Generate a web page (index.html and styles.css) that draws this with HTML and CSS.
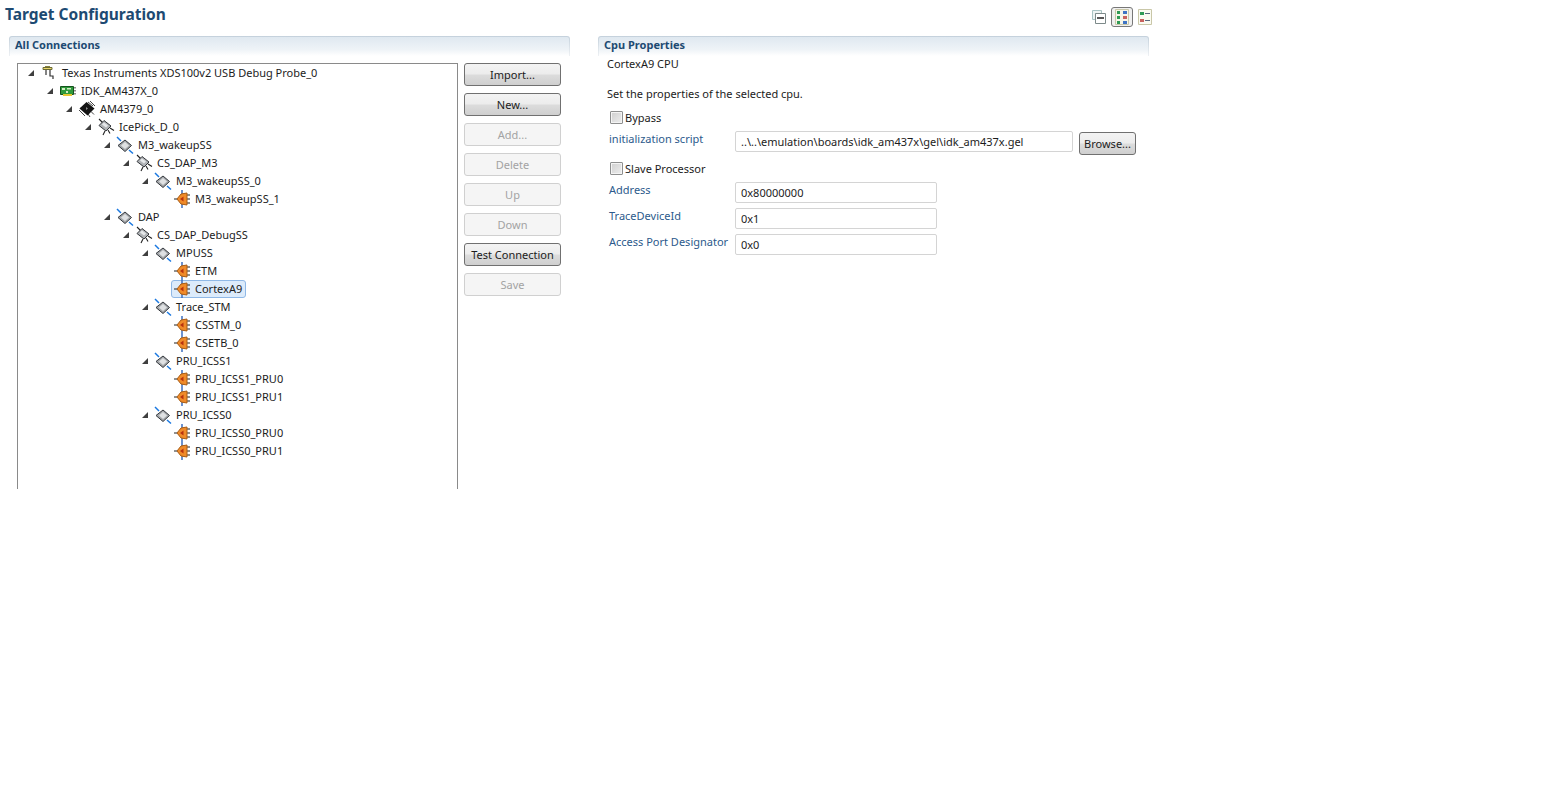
FILE: index.html
```html
<!DOCTYPE html>
<html lang="en">
<head>
    <meta charset="UTF-8">
    <title>Target Configuration</title>
    <link rel="stylesheet" href="styles.css">
</head>
<body>

    <svg class="icon-defs" aria-hidden="true">
        <symbol id="i-probe" viewBox="0 0 16 16">
            <path d="M5 4v6M9 4v7h3v3" fill="none" stroke="#333" stroke-width="1.2"/>
            <path d="M2 2.500h9v2H2z" fill="#e8d76a" stroke="#6b6a35" stroke-width="1"/>
            <path d="M4 1.500h5" stroke="#8a8540" stroke-width="1"/>
        </symbol>
        <symbol id="i-board" viewBox="0 0 16 16">
            <path d="M0.500 3.500h13v8h-13z" fill="#2f9a3c" stroke="#14521c"/>
            <path d="M2 5h3v2H2zM7 5h4v1.500H7zM6 8h2v2H6z" fill="#d4ecc4"/>
            <path d="M3 11h9v2H3z" fill="#e6c832"/>
            <path d="M15 4v1.500M15 7v1.500M15 10v1.500" stroke="#222" stroke-width="1"/>
        </symbol>
        <symbol id="i-chip" viewBox="0 0 16 16">
            <path d="M0 9l4 4M2 6.500l4 4M9 1l5 4M11 0l5 5M3 12l3 3M9 13l2 3M12 10.500l3 3" stroke="#444" stroke-width="1"/>
            <path d="M7.500 1l8 6.500-7 7-8-7z" fill="#141414"/>
            <path d="M7 6l2 1.500-2 1.500z" fill="#8a8a8a"/>
        </symbol>
        <symbol id="i-router" viewBox="0 0 16 16">
            <path d="M7 12l-2 4M10 11l2 3.500M12 9l4 2.500M1 0l4 4" stroke="#222" stroke-width="1.100" fill="none"/>
            <path d="M6 1.500l7 5.500-5 5-7-5.500z" fill="#b0b3b6" stroke="#34373c"/>
            <path d="M6 3.500l4 3-2 2-4-3z" fill="#e6e8ea"/>
        </symbol>
        <symbol id="i-node" viewBox="0 0 16 16">
            <path d="M8 3l6.500 5.500-6.500 6-7-6z" fill="#a4a7aa" stroke="#34383e"/>
            <path d="M8 5l4 3.500-4 3.500-4-3.500z" fill="#dfe1e3"/>
            <path d="M0 0l4 4M12 13l4 3.500" stroke="#1a78e0" stroke-width="1.500"/>
        </symbol>
        <symbol id="i-core" viewBox="0 0 16 16">
            <path d="M8 -1v4M8 13v4" stroke="#3c6fc0" stroke-width="1.500"/>
            <path d="M0 8h3M13 4h3M13 8h3M13 12h3" stroke="#222" stroke-width="1"/>
            <path d="M3 8l4-5 6-1v12l-6-1z" fill="#f08b2a" stroke="#a85c14"/>
            <path d="M6 8l3.500-2.500v5z" fill="#b8320f"/>
        </symbol>
    </svg>

    <div class="page">
        <header class="page-head">
            <h1>Target Configuration</h1>
            <div class="toolbar">
                <span class="tool">
                    <svg width="14" height="14" viewBox="0 0 14 14">
                        <path d="M0.500 0.500h9v3h-6v6h-3z" fill="#eef3f3" stroke="#a9c4c4"/>
                        <path d="M3.500 3.500h10v10h-10z" fill="#fff" stroke="#7d8a8a"/>
                        <path d="M5 8h7" stroke="#111" stroke-width="1.400"/>
                    </svg>
                </span>
                <span class="tool tool-on">
                    <svg width="14" height="16" viewBox="0 0 14 16">
                        <path d="M0.500 0.500h13v15h-13z" fill="#f6f5e8" stroke="#c9c7a8"/>
                        <path d="M2 2h3v3H2zM2 7h3v3H2zM2 12h3v3H2z" fill="#2f9a55"/>
                        <path d="M8 2h4v3H8zM8 12h4v3H8z" fill="#3f74c4"/>
                        <path d="M8 7h4v3H8z" fill="#c9625e"/>
                    </svg>
                </span>
                <span class="tool">
                    <svg width="14" height="16" viewBox="0 0 14 16">
                        <path d="M0.500 0.500h13v15h-13z" fill="#fbfbf2" stroke="#c9c7a8"/>
                        <path d="M2 3h4v3H2z" fill="#2f9a55"/>
                        <path d="M2 10h4v3H2z" fill="#c9625e"/>
                        <path d="M7 4.500h5M7 11.500h5" stroke="#5a6a80" stroke-width="1.200"/>
                    </svg>
                </span>
            </div>
        </header>

        <main class="columns">
            <section class="panel panel-left">
                <h2 class="panel-title">All Connections</h2>
                <div class="connections">
                    <div class="tree">
                        <ul>
                            <li>
                                <div class="row"><i class="arrow"></i><span class="item"><svg class="ic"><use href="#i-probe"/></svg>Texas Instruments XDS100v2 USB Debug Probe_0</span></div>
                                <ul>
                                    <li>
                                        <div class="row"><i class="arrow"></i><span class="item"><svg class="ic"><use href="#i-board"/></svg>IDK_AM437X_0</span></div>
                                        <ul>
                                            <li>
                                                <div class="row"><i class="arrow"></i><span class="item"><svg class="ic"><use href="#i-chip"/></svg>AM4379_0</span></div>
                                                <ul>
                                                    <li>
                                                        <div class="row"><i class="arrow"></i><span class="item"><svg class="ic"><use href="#i-router"/></svg>IcePick_D_0</span></div>
                                                        <ul>
                                                            <li>
                                                                <div class="row"><i class="arrow"></i><span class="item"><svg class="ic"><use href="#i-node"/></svg>M3_wakeupSS</span></div>
                                                                <ul>
                                                                    <li>
                                                                        <div class="row"><i class="arrow"></i><span class="item"><svg class="ic"><use href="#i-router"/></svg>CS_DAP_M3</span></div>
                                                                        <ul>
                                                                            <li>
                                                                                <div class="row"><i class="arrow"></i><span class="item"><svg class="ic"><use href="#i-node"/></svg>M3_wakeupSS_0</span></div>
                                                                                <ul>
                                                                                    <li><div class="row"><i class="arrow none"></i><span class="item"><svg class="ic"><use href="#i-core"/></svg>M3_wakeupSS_1</span></div></li>
                                                                                </ul>
                                                                            </li>
                                                                        </ul>
                                                                    </li>
                                                                </ul>
                                                            </li>
                                                            <li>
                                                                <div class="row"><i class="arrow"></i><span class="item"><svg class="ic"><use href="#i-node"/></svg>DAP</span></div>
                                                                <ul>
                                                                    <li>
                                                                        <div class="row"><i class="arrow"></i><span class="item"><svg class="ic"><use href="#i-router"/></svg>CS_DAP_DebugSS</span></div>
                                                                        <ul>
                                                                            <li>
                                                                                <div class="row"><i class="arrow"></i><span class="item"><svg class="ic"><use href="#i-node"/></svg>MPUSS</span></div>
                                                                                <ul>
                                                                                    <li><div class="row"><i class="arrow none"></i><span class="item"><svg class="ic"><use href="#i-core"/></svg>ETM</span></div></li>
                                                                                    <li><div class="row"><i class="arrow none"></i><span class="item selected"><svg class="ic"><use href="#i-core"/></svg>CortexA9</span></div></li>
                                                                                </ul>
                                                                            </li>
                                                                            <li>
                                                                                <div class="row"><i class="arrow"></i><span class="item"><svg class="ic"><use href="#i-node"/></svg>Trace_STM</span></div>
                                                                                <ul>
                                                                                    <li><div class="row"><i class="arrow none"></i><span class="item"><svg class="ic"><use href="#i-core"/></svg>CSSTM_0</span></div></li>
                                                                                    <li><div class="row"><i class="arrow none"></i><span class="item"><svg class="ic"><use href="#i-core"/></svg>CSETB_0</span></div></li>
                                                                                </ul>
                                                                            </li>
                                                                            <li>
                                                                                <div class="row"><i class="arrow"></i><span class="item"><svg class="ic"><use href="#i-node"/></svg>PRU_ICSS1</span></div>
                                                                                <ul>
                                                                                    <li><div class="row"><i class="arrow none"></i><span class="item"><svg class="ic"><use href="#i-core"/></svg>PRU_ICSS1_PRU0</span></div></li>
                                                                                    <li><div class="row"><i class="arrow none"></i><span class="item"><svg class="ic"><use href="#i-core"/></svg>PRU_ICSS1_PRU1</span></div></li>
                                                                                </ul>
                                                                            </li>
                                                                            <li>
                                                                                <div class="row"><i class="arrow"></i><span class="item"><svg class="ic"><use href="#i-node"/></svg>PRU_ICSS0</span></div>
                                                                                <ul>
                                                                                    <li><div class="row"><i class="arrow none"></i><span class="item"><svg class="ic"><use href="#i-core"/></svg>PRU_ICSS0_PRU0</span></div></li>
                                                                                    <li><div class="row"><i class="arrow none"></i><span class="item"><svg class="ic"><use href="#i-core"/></svg>PRU_ICSS0_PRU1</span></div></li>
                                                                                </ul>
                                                                            </li>
                                                                        </ul>
                                                                    </li>
                                                                </ul>
                                                            </li>
                                                        </ul>
                                                    </li>
                                                </ul>
                                            </li>
                                        </ul>
                                    </li>
                                </ul>
                            </li>
                        </ul>
                    </div>
                    <div class="actions">
                        <button type="button" class="btn">Import...</button>
                        <button type="button" class="btn">New...</button>
                        <button type="button" class="btn" disabled>Add...</button>
                        <button type="button" class="btn" disabled>Delete</button>
                        <button type="button" class="btn" disabled>Up</button>
                        <button type="button" class="btn" disabled>Down</button>
                        <button type="button" class="btn">Test Connection</button>
                        <button type="button" class="btn" disabled>Save</button>
                    </div>
                </div>
            </section>

            <section class="panel panel-right">
                <h2 class="panel-title">Cpu Properties</h2>
                <div class="props">
                    <p class="cpu-name">CortexA9 CPU</p>
                    <p class="cpu-hint">Set the properties of the selected cpu.</p>
                    <label class="check"><input type="checkbox">Bypass</label>
                    <div class="field field-script">
                        <label for="script">initialization script</label>
                        <input type="text" id="script" class="input-wide" value="..\..\emulation\boards\idk_am437x\gel\idk_am437x.gel">
                        <button type="button" class="btn btn-browse">Browse...</button>
                    </div>
                    <label class="check check-slave"><input type="checkbox">Slave Processor</label>
                    <div class="field">
                        <label for="address">Address</label>
                        <input type="text" id="address" value="0x80000000">
                    </div>
                    <div class="field">
                        <label for="trace">TraceDeviceId</label>
                        <input type="text" id="trace" value="0x1">
                    </div>
                    <div class="field">
                        <label for="port">Access Port Designator</label>
                        <input type="text" id="port" value="0x0">
                    </div>
                </div>
            </section>
        </main>
    </div>

</body>
</html>
```

FILE: styles.css
```css
* {
    box-sizing: border-box;
}
body {
    margin: 0;
    background: white;
    font-family: "Noto Sans", "Open Sans", sans-serif;
    font-size: 11px;
    color: #1c1c1c;
}
.icon-defs {
    position: absolute;
    width: 0;
    height: 0;
}
symbol {
    overflow: visible;
}
.page {
    width: 1156px;
}
.page-head {
    display: flex;
    justify-content: space-between;
    height: 36px;
    padding-left: 5px;
}
h1 {
    margin: 4px 0 0;
    font-size: 15.5px;
    line-height: 20px;
    font-weight: bold;
    color: #1d4a72;
}
.toolbar {
    display: flex;
    align-items: center;
    height: 20px;
    margin-top: 7px;
}
.tool {
    display: flex;
    align-items: center;
    justify-content: center;
    width: 22px;
    height: 20px;
    margin-left: 1px;
}
.tool-on {
    background: #f0f0f0;
    border: 1px solid #777;
    border-radius: 3px;
}
.columns {
    display: flex;
    gap: 28px;
    padding-left: 9px;
}
.panel-left {
    width: 561px;
}
.panel-right {
    width: 551px;
}
.panel-title {
    height: 20px;
    margin: 0;
    padding: 0 5px;
    font-size: 11px;
    line-height: 16px;
    font-weight: bold;
    color: #1d4a72;
    border: 1px solid transparent;
    border-bottom: 0;
    border-radius: 3px 3px 0 0;
    background:
        linear-gradient(#dfe8f0, #eef3f7 65%, white) padding-box,
        linear-gradient(#c4d1dc, #eef1f4) border-box;
}
.connections {
    display: flex;
    margin-top: 7px;
    padding-left: 8px;
}
.tree {
    width: 441px;
    height: 426px;
    border: 1px solid #8a8a8a;
    border-bottom: 0;
    overflow: hidden;
}
.tree > ul {
    padding: 0 0 0 8px;
}
.tree ul {
    list-style: none;
    margin: 0;
}
.tree ul ul {
    padding-left: 19px;
}
.row {
    display: flex;
    align-items: center;
    height: 18px;
}
.arrow {
    flex: none;
    display: flex;
    align-items: center;
    justify-content: center;
    width: 10px;
    margin-right: 2px;
}
.arrow::before {
    content: "";
    border-left: 6px solid transparent;
    border-bottom: 6px solid #3f3f3f;
}
.arrow.none::before {
    display: none;
}
.item {
    display: flex;
    align-items: center;
    height: 18px;
    padding: 0 3px 2px 2px;
    border: 1px solid transparent;
    border-radius: 3px;
    white-space: nowrap;
}
.selected {
    background: #dcebfb;
    border-color: #8fb8e6;
}
.ic {
    flex: none;
    width: 16px;
    height: 16px;
    margin: 2px 5px 0 0;
    overflow: visible;
}
.actions {
    display: flex;
    flex-direction: column;
    gap: 7px;
    width: 97px;
    margin-left: 6px;
}
.btn {
    width: 100%;
    height: 23px;
    padding: 0;
    font-family: inherit;
    font-size: 11px;
    color: #1c1c1c;
    border: 1px solid #707070;
    border-radius: 3px;
    background: linear-gradient(#f3f3f3, #ececec 48%, #dcdcdc 52%, #cfcfcf);
}
.btn:disabled {
    color: #a3a3a3;
    border-color: #d0d0d0;
    background: #f5f5f5;
}
.props {
    padding-left: 9px;
}
.cpu-name {
    margin: 0;
    line-height: 16px;
}
.cpu-hint {
    margin: 14px 0 0;
    line-height: 16px;
}
.check {
    display: flex;
    align-items: center;
    height: 16px;
    padding-bottom: 2px;
    margin-top: 8px;
}
.check input {
    appearance: none;
    width: 13px;
    height: 13px;
    margin: 0 2px 0 3px;
    border: 1px solid #8e8f8f;
    border-radius: 1px;
    background: linear-gradient(135deg, #cfcfcf, #eeeeee);
    box-shadow: inset 0 0 0 1px #f4f4f4;
}
.check-slave {
    margin-top: 6px;
}
.field {
    display: flex;
    align-items: flex-start;
    margin: 5px 0 0 2px;
    height: 21px;
}
.field label {
    width: 126px;
    line-height: 15px;
    color: #2c5a8c;
    white-space: nowrap;
}
.field input {
    width: 202px;
    height: 21px;
    padding: 0 5px;
    font-family: inherit;
    font-size: 11px;
    color: #1c1c1c;
    border: 1px solid #d4d4d4;
    border-radius: 2px;
    outline: none;
}
.field .input-wide {
    width: 338px;
}
.field-script {
    height: 24px;
}
.btn-browse {
    width: 57px;
    margin: 1px 0 0 6px;
}
```
